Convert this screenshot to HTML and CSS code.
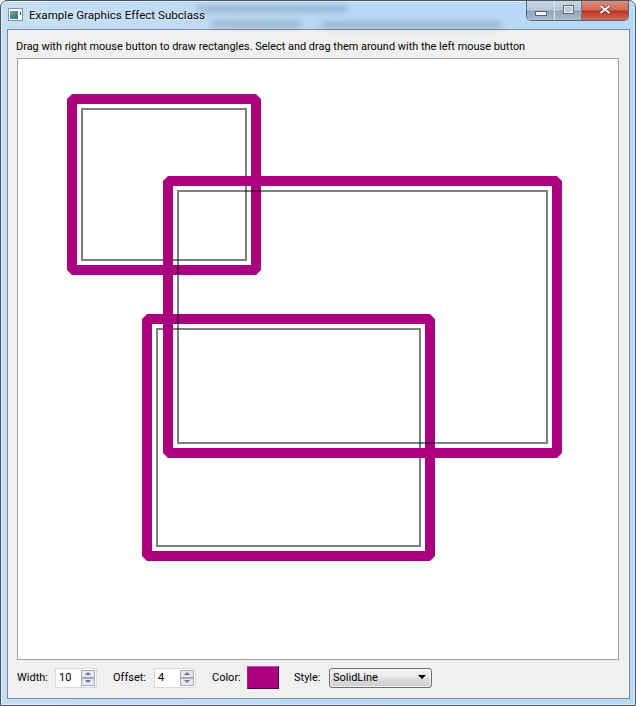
FILE: index.html
```html
<!DOCTYPE html>
<html lang="en">
<head>
    <meta charset="UTF-8">
    <title>Example Graphics Effect Subclass</title>
    <link rel="stylesheet" href="styles.css">
</head>
<body>
    <div class="window">
        <div class="titlebar">
            <svg class="app-icon" width="15" height="13" viewBox="0 0 15 13">
                <defs>
                    <linearGradient id="icon-fill" x1="0" y1="0" x2="1" y2="1">
                        <stop offset="0" stop-color="#7f9fb0"/>
                        <stop offset="1" stop-color="#1f7f66"/>
                    </linearGradient>
                </defs>
                <rect x="0.5" y="0.5" width="14" height="12" fill="#fbfbfb" stroke="#8d9299"/>
                <rect x="2" y="3" width="8" height="8" fill="url(#icon-fill)"/>
                <rect x="12" y="4" width="1" height="3" fill="#33475a"/>
            </svg>
            <span class="title">Example Graphics Effect Subclass</span>
            <div class="smudge smudge-one"></div>
            <div class="smudge smudge-two"></div>
            <div class="smudge smudge-three"></div>
            <div class="window-buttons">
                <div class="win-btn btn-min"><span class="min-glyph"></span></div>
                <div class="win-btn btn-max"><span class="max-glyph"></span></div>
                <div class="win-btn btn-close">
                    <svg width="12" height="9" viewBox="0 0 12 9">
                        <path d="M1.5 1 L10.5 8 M10.5 1 L1.5 8" stroke="#4b3a3a" stroke-width="3.4" fill="none"/>
                        <path d="M1.5 1 L10.5 8 M10.5 1 L1.5 8" stroke="#f4f1f0" stroke-width="2.2" fill="none"/>
                    </svg>
                </div>
            </div>
        </div>

        <div class="panel">
            <p class="hint">Drag with right mouse button to draw rectangles. Select and drag them around with the left mouse button</p>

            <div class="canvas">
                <svg class="scene" width="600" height="600" viewBox="18 59 600 600">
                    <!-- back to front, page coordinates -->
                    <rect class="outline" x="72" y="99" width="184" height="171"/>
                    <rect class="inner" x="82" y="109" width="164" height="151"/>
                    <rect class="outline" x="147" y="319" width="283" height="237"/>
                    <rect class="inner" x="157" y="329" width="263" height="217"/>
                    <rect class="outline" x="168" y="181" width="389" height="272"/>
                    <rect class="inner" x="178" y="191" width="369" height="252"/>
                </svg>
            </div>

            <div class="controls">
                <label class="ctl-label ctl-width">Width:</label>
                <div class="spinbox">
                    <span class="spin-value">10</span>
                    <div class="spin-arrows">
                        <div class="spin-btn"><span class="arrow-up"></span></div>
                        <div class="spin-btn"><span class="arrow-down"></span></div>
                    </div>
                </div>
                <label class="ctl-label ctl-offset">Offset:</label>
                <div class="spinbox">
                    <span class="spin-value">4</span>
                    <div class="spin-arrows">
                        <div class="spin-btn"><span class="arrow-up"></span></div>
                        <div class="spin-btn"><span class="arrow-down"></span></div>
                    </div>
                </div>
                <label class="ctl-label ctl-color">Color:</label>
                <div class="swatch"></div>
                <label class="ctl-label ctl-style">Style:</label>
                <div class="combo">
                    <span>SolidLine</span>
                    <span class="combo-arrow"></span>
                </div>
            </div>
        </div>
    </div>
</body>
</html>
```

FILE: styles.css
```css
html, body {
    margin: 0;
    padding: 0;
}

body {
    width: 636px;
    height: 706px;
    overflow: hidden;
    background-color: #fff;
    font-family: Roboto, "Open Sans", sans-serif;
    font-size: 11px;
    color: #000;
}

.window {
    width: 636px;
    height: 706px;
    box-sizing: border-box;
    border: 1px solid #4a5560;
    border-radius: 7px 7px 0 0;
    background: linear-gradient(90deg, #c4def5 0%, #b9d9f6 50%, #b8daf9 100%);
    box-shadow: inset 0 0 0 1px rgba(255, 255, 255, 0.45);
    overflow: hidden;
}

.titlebar {
    position: relative;
    display: flex;
    align-items: flex-start;
    height: 28px;
}

.app-icon {
    margin: 7px 0 0 7px;
}

.title {
    margin: 6px 0 0 6px;
    font-size: 11.6px;
    line-height: 17px;
    color: #06060c;
    text-shadow: 0 0 5px rgba(255, 255, 255, 0.9);
}

.smudge {
    position: absolute;
    height: 6px;
    background-color: rgba(60, 75, 105, 0.3);
    filter: blur(3px);
}

.smudge-one {
    left: 196px;
    top: 5px;
    width: 150px;
}

.smudge-two {
    left: 210px;
    top: 20px;
    width: 90px;
}

.smudge-three {
    left: 320px;
    top: 21px;
    width: 180px;
}

.window-buttons {
    display: flex;
    margin-left: auto;
    margin-right: 6px;
    height: 19px;
    border: 1px solid #5b6672;
    border-top: none;
    border-radius: 0 0 5px 5px;
    overflow: hidden;
}

.win-btn {
    display: flex;
    align-items: center;
    justify-content: center;
    height: 19px;
    background: linear-gradient(180deg, #c9d6e3 0%, #b6c6d6 48%, #8ea3b8 52%, #a9bccb 100%);
}

.btn-min {
    width: 27px;
    border-right: 1px solid #dbe5ee;
}

.btn-max {
    width: 26px;
    border-right: 1px solid #6d7883;
}

.btn-close {
    width: 46px;
    background: linear-gradient(180deg, #dd8c7c 0%, #d26a58 45%, #bf3524 55%, #cf6b58 100%);
}

.min-glyph {
    display: block;
    box-sizing: border-box;
    width: 12px;
    height: 5px;
    margin-top: 5px;
    background-color: #f4f6f8;
    border: 1px solid #55626f;
}

.max-glyph {
    display: block;
    box-sizing: border-box;
    width: 11px;
    height: 9px;
    margin-bottom: 3px;
    background-color: #b9c8d6;
    border: 2px solid #f0f3f6;
    outline: 1px solid #5e6b78;
    outline-offset: -1px;
}

.btn-close svg {
    margin-bottom: 3px;
}

.panel {
    display: flex;
    flex-direction: column;
    box-sizing: border-box;
    width: 623px;
    height: 670px;
    margin-left: 6px;
    padding: 9px 10px 0 9px;
    background-color: #f0f0f0;
    border: 1px solid #7f8894;
}

.hint {
    margin: 0 0 4px -1px;
    height: 15px;
    line-height: 15px;
    font-size: 10.94px;
    white-space: nowrap;
}

.canvas {
    box-sizing: border-box;
    width: 602px;
    height: 602px;
    background-color: #fff;
    border: 1px solid #a0a0a0;
}

.scene {
    display: block;
}

.outline {
    fill: none;
    stroke: #aa007f;
    stroke-width: 10;
    stroke-linejoin: bevel;
}

.inner {
    fill: none;
    stroke: rgba(0, 0, 0, 0.5);
    stroke-width: 2;
}

.controls {
    display: flex;
    align-items: center;
    height: 23px;
    margin-top: 6px;
}

.ctl-label {
    line-height: 15px;
}

.ctl-width {
    width: 38px;
}

.ctl-offset {
    width: 41px;
    margin-left: 16px;
}

.ctl-color {
    width: 35px;
    margin-left: 16px;
}

.ctl-style {
    width: 35px;
    margin-left: 15px;
}

.spinbox {
    display: flex;
    align-items: center;
    justify-content: space-between;
    box-sizing: border-box;
    width: 42px;
    height: 20px;
    padding: 0 1px 0 3px;
    background-color: #fff;
    border: 1px solid #d8dade;
}

.spin-value {
    line-height: 15px;
}

.spin-arrows {
    display: flex;
    flex-direction: column;
}

.spin-btn {
    display: flex;
    align-items: center;
    justify-content: center;
    box-sizing: border-box;
    width: 14px;
    height: 8px;
    background-color: #e6e8ee;
    border: 1px solid #a9abb2;
}

.arrow-up {
    width: 0;
    height: 0;
    border-left: 3px solid transparent;
    border-right: 3px solid transparent;
    border-bottom: 3px solid #5f74b4;
}

.arrow-down {
    width: 0;
    height: 0;
    border-left: 3px solid transparent;
    border-right: 3px solid transparent;
    border-top: 3px solid #5f74b4;
}

.swatch {
    box-sizing: border-box;
    width: 32px;
    height: 23px;
    background-color: #aa007f;
    border: 1px solid;
    border-color: #c94aa8 #55003f #55003f #b01c8a;
}

.combo {
    display: flex;
    align-items: center;
    justify-content: space-between;
    box-sizing: border-box;
    width: 103px;
    height: 20px;
    padding: 0 5px 1px 3px;
    background: linear-gradient(180deg, #f2f2f2 0%, #ebebeb 45%, #dddddd 50%, #cfcfcf 100%);
    border: 1px solid #6f6f6f;
    border-radius: 3px;
    box-shadow: inset 0 0 0 1px rgba(255, 255, 255, 0.7);
}

.combo-arrow {
    width: 0;
    height: 0;
    border-left: 4px solid transparent;
    border-right: 4px solid transparent;
    border-top: 4px solid #000;
}
```
